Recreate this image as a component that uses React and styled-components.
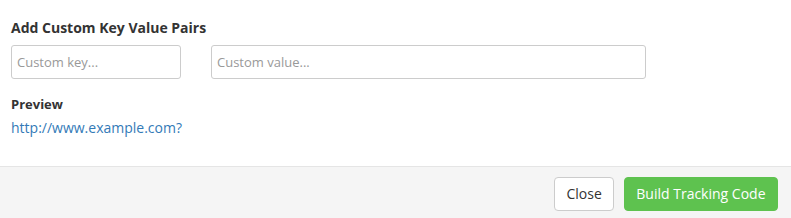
import React from "react";
import styled, { createGlobalStyle } from "styled-components";

const Global = createGlobalStyle`
  html, body { margin: 0; padding: 0; background: #fff; }
  body { font-family: "Open Sans", "Liberation Sans", sans-serif; color: #333; }
  * { box-sizing: border-box; }
`;

const Modal = styled.div`
  width: 791px;
  height: 218px;
  display: flex;
  flex-direction: column;
  background: #fff;
`;

const Body = styled.div`
  flex: 1;
  padding: 18px 11px 0;
`;

const Heading = styled.h4`
  margin: 0 0 7px;
  font-size: 14px;
  line-height: 20px;
  font-weight: 700;
  color: #333;
`;

const Label = styled.div`
  margin-top: 16px;
  font-size: 13px;
  line-height: 18px;
  font-weight: 700;
  color: #333;
`;

const Row = styled.div`
  display: flex;
  gap: 30px;
`;

const Input = styled.input`
  width: ${(p) => p.$w}px;
  height: 34px;
  padding: 6px 5px;
  border: 1px solid #ccc;
  border-radius: 3px;
  font-family: inherit;
  font-size: 13px;
  color: #555;
  outline: none;
  &::placeholder { color: #999; }
`;

const Link = styled.a`
  display: block;
  margin-top: 5px;
  font-size: 14px;
  line-height: 20px;
  color: #337ab7;
  text-decoration: none;
`;

const Footer = styled.div`
  height: 52px;
  border-top: 1px solid #e5e5e5;
  background: #f5f5f5;
  display: flex;
  justify-content: flex-end;
  align-items: flex-start;
  gap: 10px;
  padding: 10px 13px 0;
`;

const Button = styled.button`
  height: 34px;
  padding: 0 ${(p) => (p.$primary ? 11.5 : 11)}px;
  border-radius: 4px;
  font-family: inherit;
  font-size: 14px;
  line-height: 20px;
  cursor: pointer;
  border: 1px solid ${(p) => (p.$primary ? "#5ec24f" : "#ccc")};
  background: ${(p) => (p.$primary ? "#5ec24f" : "#fff")};
  color: ${(p) => (p.$primary ? "#fff" : "#333")};
`;

export default function App() {
  return (
    <Modal>
      <Global />
      <Body>
        <Heading>Add Custom Key Value Pairs</Heading>
        <Row>
          <Input $w={170} placeholder="Custom key..." />
          <Input $w={435} placeholder="Custom value..." />
        </Row>
        <Label>Preview</Label>
        <Link href="#">http://www.example.com?</Link>
      </Body>
      <Footer>
        <Button>Close</Button>
        <Button $primary>Build Tracking Code</Button>
      </Footer>
    </Modal>
  );
}
